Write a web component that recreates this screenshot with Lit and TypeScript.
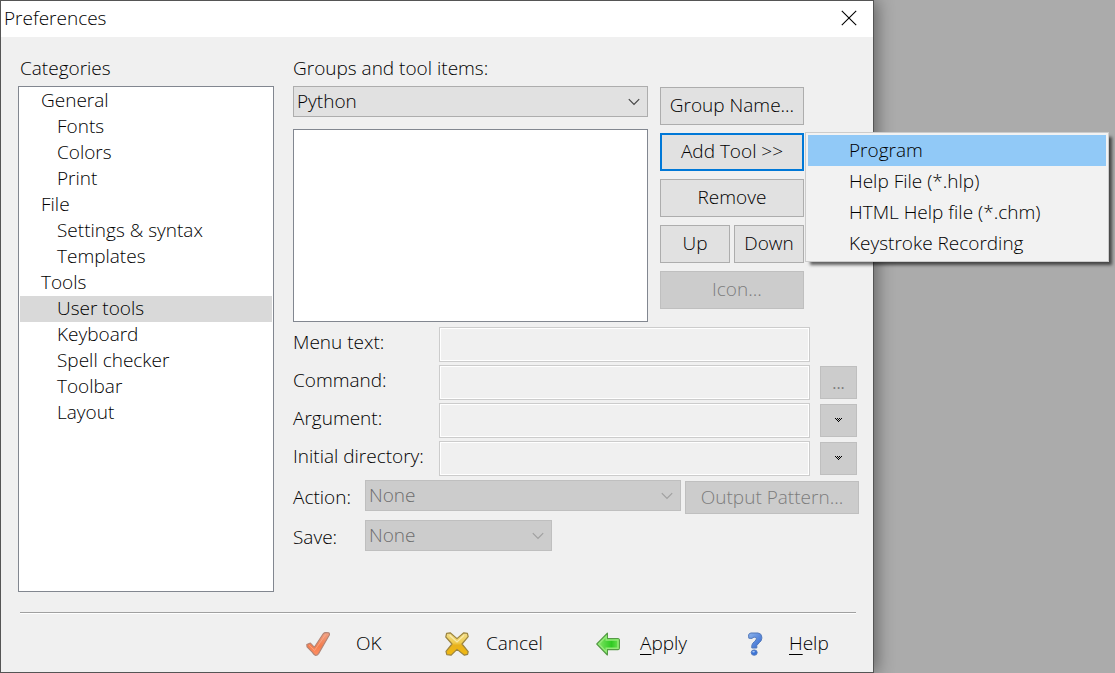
import { LitElement, html, css, svg } from "lit";
import { customElement, state } from "lit/decorators.js";
import { classMap } from "lit/directives/class-map.js";

interface Category {
  name: string;
  children: string[];
}

const CATEGORIES: Category[] = [
  { name: "General", children: ["Fonts", "Colors", "Print"] },
  { name: "File", children: ["Settings & syntax", "Templates"] },
  {
    name: "Tools",
    children: ["User tools", "Keyboard", "Spell checker", "Toolbar", "Layout"],
  },
];

const TOOL_KINDS = [
  "Program",
  "Help File (*.hlp)",
  "HTML Help file (*.chm)",
  "Keystroke Recording",
];

const chevron = html`<svg class="chevron" viewBox="0 0 12 8" aria-hidden="true">
  <path d="M0.8 1.2 L6 6.4 L11.2 1.2" fill="none" stroke="currentColor" stroke-width="1.2" />
</svg>`;

const ditherRows = [
  [0, 2, 4, 6],
  [1, 3, 5],
  [2, 4],
  [3],
];

const ditherArrow = html`<svg class="dither" viewBox="0 0 7 4" shape-rendering="crispEdges" aria-hidden="true">
  ${ditherRows.map((xs, y) =>
    xs.map((x) => svg`<rect x=${x} y=${y} width="1" height="1" fill="#000" />`)
  )}
</svg>`;

const checkIcon = html`<svg class="icon" viewBox="0 0 24 24" aria-hidden="true">
  <defs>
    <linearGradient id="ck" x1="0" y1="0" x2="0" y2="1">
      <stop offset="0" stop-color="#f0a184" />
      <stop offset="0.6" stop-color="#f57d4e" />
      <stop offset="1" stop-color="#ff8f63" />
    </linearGradient>
  </defs>
  <path
    d="M0.8 12.6 L4.4 11 L8.3 15.2 L17.2 1.8 Q18.2 0.5 20 0.6 L22.6 0.8 Q24 1.6 23.2 3.3 L12.6 21.6 Q11.2 23.6 9.2 23.3 Q7.6 22.4 6.4 20.4 L1 14.8 Z"
    fill="url(#ck)" stroke="#b08476" stroke-width="1.1" stroke-linejoin="round" />
  <path d="M3 13.2 L8.6 18.4 L19.6 2.6" fill="none" stroke="#f9b79d" stroke-width="1" opacity="0.6" />
</svg>`;

const crossIcon = html`<svg class="icon" viewBox="0 0 24 24" aria-hidden="true">
  <defs>
    <linearGradient id="cx" x1="0" y1="0" x2="0" y2="1">
      <stop offset="0" stop-color="#f1de8f" />
      <stop offset="0.45" stop-color="#efcb4d" />
      <stop offset="0.55" stop-color="#e9b21c" />
      <stop offset="1" stop-color="#f0b810" />
    </linearGradient>
  </defs>
  <path
    d="M5.2 0.8 L12 6.6 L18.8 0.8 L22.4 1.4 L23.2 4.6 L17 12 L23.2 19.6 L22.6 22.4 L19.4 23.2 L12 17.4 L6.2 23.2 L1.8 22.6 L1 19.4 L7 12 L0.8 5 L1.6 1.4 Z"
    fill="url(#cx)" stroke="#9b8440" stroke-width="1.2" stroke-linejoin="round" />
  <path d="M4.6 3.2 L12 10 L19 3.4" fill="none" stroke="#fbf0bd" stroke-width="1.2" opacity="0.8" />
</svg>`;

const arrowIcon = html`<svg class="icon" viewBox="0 0 24 24" aria-hidden="true">
  <defs>
    <linearGradient id="ar" x1="0" y1="0" x2="1" y2="0">
      <stop offset="0" stop-color="#8be86c" />
      <stop offset="0.65" stop-color="#2fca22" />
      <stop offset="1" stop-color="#6fe455" />
    </linearGradient>
  </defs>
  <path
    d="M0.8 12 L11.4 1.2 V6.6 H22 Q23.4 6.8 23.4 8 V16 Q23.4 17.4 22 17.6 H11.4 V23 Z"
    fill="url(#ar)" stroke="#559a45" stroke-width="1.2" stroke-linejoin="round" />
  <path d="M2.8 12 L10.2 4.4 V8 H22 V16.2 H10.2 V19.8 Z" fill="none" stroke="#93ea78" stroke-width="1.4" />
</svg>`;

const helpIcon = html`<svg class="icon" viewBox="0 0 24 24" aria-hidden="true">
  <defs>
    <linearGradient id="hp" x1="0" y1="0" x2="1" y2="1">
      <stop offset="0" stop-color="#8db4ec" />
      <stop offset="1" stop-color="#3166cf" />
    </linearGradient>
  </defs>
  <path
    d="M5.6 3 Q6 1.2 8 1 H15 Q18.6 1.4 18.8 5 V6.4 Q18.6 9 16.2 10.8 L13.8 13.4 V16 H8.8 V13.6 Q9 11.4 11.4 9.6 Q13.6 8 13.4 6.2 Q13.2 5.2 11.6 5.2 Q9.8 5.2 9 6.4 L5.8 6.2 Z"
    fill="url(#hp)" stroke="#5379ba" stroke-width="1" stroke-linejoin="round" />
  <ellipse cx="11.2" cy="20.6" rx="3" ry="2.7" fill="#3b74d8" stroke="#5379ba" stroke-width="0.9" />
  <ellipse cx="10.6" cy="19.7" rx="1.4" ry="0.8" fill="#a9c8f4" />
</svg>`;

@customElement("app-root")
export class AppRoot extends LitElement {
  @state() private selected = "User tools";

  static styles = css`
    :host {
      display: flex;
      min-height: 100vh;
      padding-right: 241px;
      box-sizing: border-box;
      overflow: hidden;
      background: #ababab;
      color: #000;
      font: 300 19px/26px "Open Sans", "Noto Sans", sans-serif;
    }
    *,
    *::before {
      box-sizing: border-box;
    }
    button,
    input,
    select {
      font: inherit;
      color: inherit;
      margin: 0;
      border-radius: 0;
    }
    .dialog {
      flex: 1;
      min-width: 0;
      display: flex;
      flex-direction: column;
      border: 1px solid #555;
      background: #f0f0f0;
      box-shadow: 3px 0 16px rgba(0, 0, 0, 0.42);
    }
    .titlebar {
      display: flex;
      align-items: center;
      justify-content: space-between;
      height: 36px;
      padding: 0 16px 2px 3px;
      background: #fff;
    }
    .title {
      margin: 0;
      font: inherit;
    }
    .close {
      display: flex;
      padding: 0;
      border: 0;
      background: none;
    }
    .close svg {
      width: 16px;
      height: 16px;
    }
    .body {
      flex: 1;
      display: grid;
      grid-template-columns: 256px 1fr;
      column-gap: 19px;
      padding: 18px 14px 0 17px;
    }
    .categories {
      display: flex;
      flex-direction: column;
    }
    .heading {
      display: block;
      margin: 0 0 5px;
      font: inherit;
    }
    .categories .heading {
      padding-left: 2px;
    }
    .tree {
      flex: 1;
      margin: 0;
      padding: 1px;
      list-style: none;
      border: 1px solid #828790;
      background: #fff;
    }
    .tree ul {
      margin: 0;
      padding: 0;
      list-style: none;
    }
    .node {
      display: block;
      width: 100%;
      height: 26px;
      padding: 0 0 2px 21px;
      border: 0;
      background: none;
      line-height: 24px;
      text-align: left;
    }
    .leaf {
      padding-left: 37px;
    }
    .node.selected {
      background: #d9d9d9;
    }
    .tools {
      display: grid;
      grid-template-columns: 1fr 144px;
      column-gap: 12px;
      padding-right: 55px;
    }
    .lists {
      display: flex;
      flex-direction: column;
      gap: 12px;
    }
    .listbox {
      flex: 1;
      border: 1px solid #828790;
      background: #fff;
    }
    .actions {
      display: grid;
      grid-template-columns: 70px 70px;
      grid-auto-rows: 38px;
      gap: 8px 4px;
      padding: 1px 0 13px;
    }
    .wide {
      grid-column: span 2;
    }
    .anchor {
      position: relative;
      display: grid;
    }
    .push {
      padding: 0 0 2px;
      border: 1px solid #adadad;
      background: #e1e1e1;
      text-align: center;
      white-space: nowrap;
    }
    .push.default {
      border: 2px solid #0078d7;
    }
    .push:disabled {
      border-color: #bfbfbf;
      background: #ccc;
      color: #7c7c7c;
    }
    .menu {
      position: absolute;
      z-index: 2;
      left: calc(100% + 1px);
      top: -1px;
      width: 304px;
      padding: 2px;
      border: 1px solid #ccc;
      background: #f2f2f2;
      box-shadow: 4px 4px 3px -1px rgba(0, 0, 0, 0.6);
    }
    .item {
      display: block;
      width: 100%;
      height: 31px;
      padding: 0 0 2px 41px;
      border: 0;
      background: none;
      text-align: left;
    }
    .item.active {
      background: #91c9f7;
    }
    .combo {
      display: grid;
      grid-template-columns: 1fr;
      align-items: center;
      height: 31px;
    }
    .combo select,
    .chevron {
      grid-area: 1 / 1;
    }
    .combo select {
      appearance: none;
      width: 100%;
      height: 31px;
      padding: 0 24px 2px 3px;
      border: 1px solid #adadad;
      background: #e1e1e1;
      opacity: 1;
    }
    .combo select:disabled {
      border-color: #bfbfbf;
      background: #ccc;
      color: #6d6d6d;
    }
    .chevron {
      justify-self: end;
      width: 12px;
      height: 8px;
      margin-right: 8px;
      color: #444;
      pointer-events: none;
    }
    .disabled .chevron {
      color: #a0a0a0;
    }
    .fields {
      display: grid;
      grid-template-columns: 146px 1fr 37px;
      grid-auto-rows: 35px;
      row-gap: 3px;
      padding: 5px 2px 4px 0;
    }
    .fields label {
      grid-column: 1;
      line-height: 30px;
    }
    .fields input {
      width: calc(100% - 10px);
      height: 35px;
      padding: 0 4px;
      border: 1px solid #ccc;
      background: #f0f0f0;
      box-shadow: inset 0 0 0 1px #fff;
    }
    .fields .push {
      height: 33px;
      margin-top: 1px;
    }
    .fields .small {
      padding: 0;
      font-size: 16px;
      font-weight: 400;
    }
    .dither {
      display: block;
      width: 7px;
      height: 4px;
      margin: 0 auto;
    }
    .row {
      display: flex;
      height: 34px;
      margin-bottom: 6px;
    }
    .row label {
      width: 72px;
      line-height: 34px;
    }
    .row .combo {
      flex: 1;
      margin-right: 4px;
    }
    .row .save {
      flex: none;
      width: 187px;
    }
    .row .push {
      width: 174px;
      height: 33px;
      align-self: flex-end;
    }
    .footer {
      display: grid;
      grid-template-columns: 139px 151px 147px 87px;
      justify-content: end;
      align-items: center;
      height: 60px;
      margin: 20px 17px 0 19px;
      padding-right: 26px;
      border-top: 1px solid #a0a0a0;
      box-shadow: inset 0 1px #fff;
    }
    .command {
      display: flex;
      align-items: center;
      gap: 20px;
      padding: 2px 0 0;
      border: 0;
      background: none;
    }
    .command > span {
      padding-bottom: 2px;
    }
    .command.tight {
      gap: 17px;
    }
    .command.loose {
      gap: 26px;
    }
    .command.mid {
      gap: 22px;
    }
    .icon {
      flex: none;
      width: 24px;
      height: 24px;
    }
    .key {
      text-decoration: underline;
      text-decoration-thickness: 1px;
      text-underline-offset: 4px;
    }
  `;

  private node(name: string, leaf: boolean) {
    const selected = name === this.selected;
    return html`<button
      type="button"
      role="treeitem"
      aria-selected=${selected}
      class=${classMap({ node: true, leaf, selected })}
      @click=${() => (this.selected = name)}
    >${name}</button>`;
  }

  render() {
    return html`
      <section class="dialog" role="dialog" aria-labelledby="title">
        <header class="titlebar">
          <h1 class="title" id="title">Preferences</h1>
          <button class="close" type="button" aria-label="Close">
            <svg viewBox="0 0 16 16"><path d="M0.8 0.8 L15.2 15.2 M15.2 0.8 L0.8 15.2" stroke="#000" stroke-width="1.1" /></svg>
          </button>
        </header>

        <div class="body">
          <nav class="categories">
            <h2 class="heading" id="cat">Categories</h2>
            <ul class="tree" role="tree" aria-labelledby="cat">
              ${CATEGORIES.map(
                (c) => html`<li role="none">
                  ${this.node(c.name, false)}
                  <ul role="group">
                    ${c.children.map((n) => html`<li role="none">${this.node(n, true)}</li>`)}
                  </ul>
                </li>`
              )}
            </ul>
          </nav>

          <main>
            <label class="heading" for="group">Groups and tool items:</label>
            <div class="tools">
              <div class="lists">
                <div class="combo">
                  <select id="group"><option>Python</option></select>
                  ${chevron}
                </div>
                <div class="listbox" role="listbox" aria-label="Tool items" tabindex="0"></div>
              </div>
              <div class="actions">
                <button type="button" class="push wide">Group Name...</button>
                <div class="anchor wide">
                  <button type="button" class="push default" aria-haspopup="menu" aria-expanded="true">Add Tool &gt;&gt;</button>
                  <div class="menu" role="menu">
                    ${TOOL_KINDS.map(
                      (k, i) => html`<button type="button" role="menuitem" class=${classMap({ item: true, active: i === 0 })}>${k}</button>`
                    )}
                  </div>
                </div>
                <button type="button" class="push wide">Remove</button>
                <button type="button" class="push">Up</button>
                <button type="button" class="push">Down</button>
                <button type="button" class="push wide" disabled>&nbsp; Icon...</button>
              </div>
            </div>

            <div class="fields">
              <label for="menu-text">Menu text:</label>
              <input id="menu-text" type="text" disabled />
              <label for="command">Command:</label>
              <input id="command" type="text" disabled />
              <button type="button" class="push small" disabled aria-label="Browse for command">...</button>
              <label for="argument">Argument:</label>
              <input id="argument" type="text" disabled />
              <button type="button" class="push" disabled aria-label="Argument macros">${ditherArrow}</button>
              <label for="directory">Initial directory:</label>
              <input id="directory" type="text" disabled />
              <button type="button" class="push" disabled aria-label="Directory macros">${ditherArrow}</button>
            </div>

            <div class="row">
              <label for="action">Action:</label>
              <div class="combo disabled">
                <select id="action" disabled><option>None</option></select>
                ${chevron}
              </div>
              <button type="button" class="push" disabled>Output Pattern...</button>
            </div>
            <div class="row">
              <label for="save">Save:</label>
              <div class="combo save disabled">
                <select id="save" disabled><option>None</option></select>
                ${chevron}
              </div>
            </div>
          </main>
        </div>

        <footer class="footer">
          <button type="button" class="command loose">${checkIcon}<span>OK</span></button>
          <button type="button" class="command tight">${crossIcon}<span>Cancel</span></button>
          <button type="button" class="command">${arrowIcon}<span><span class="key">A</span>pply</span></button>
          <button type="button" class="command mid">${helpIcon}<span><span class="key">H</span>elp</span></button>
        </footer>
      </section>
    `;
  }
}
